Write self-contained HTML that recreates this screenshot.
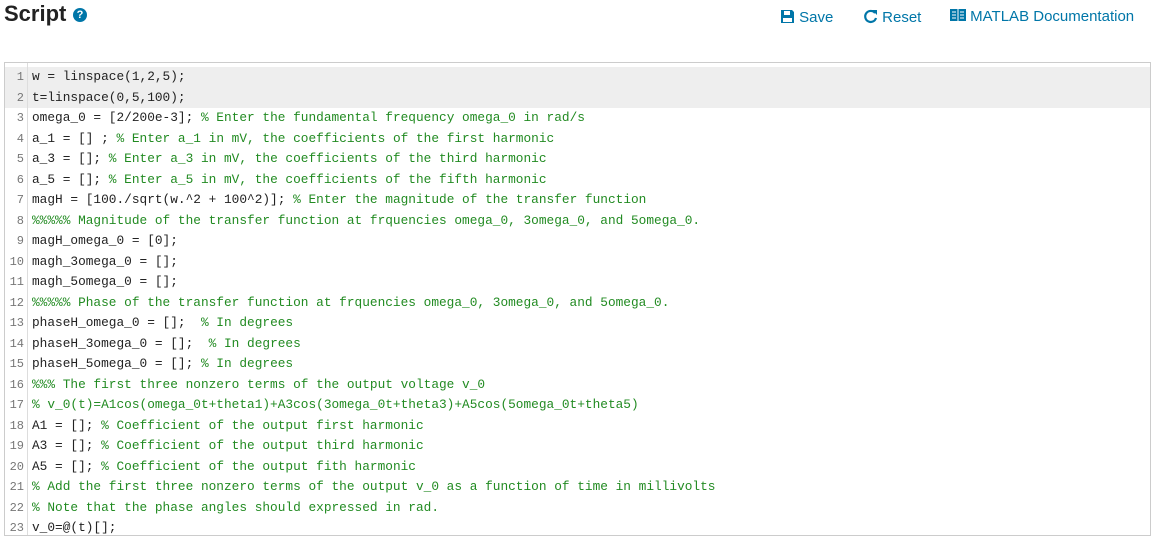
<!DOCTYPE html>
<html><head><meta charset="utf-8"><style>
body{margin:0;background:#fff;width:1163px;height:548px;overflow:hidden;font-family:"Liberation Sans",sans-serif;position:relative}
h1{position:absolute;left:4px;top:1px;margin:0;font-size:22px;font-weight:bold;color:#222}
.q{position:absolute;left:73px;top:8px;width:14px;height:14px;border-radius:50%;background:#0076a8;color:#fff;font-size:11px;font-weight:bold;text-align:center;line-height:14px}
.tb{position:absolute;top:9px;font-size:15px;color:#0076a8}
.ed{position:absolute;left:4px;top:62px;width:1147px;height:474px;border:1px solid #ccc;box-sizing:border-box;overflow:hidden}
.hl{position:absolute;left:0;right:0;top:4px;height:41px;background:#eee}
.g{position:absolute;left:0;top:4px;width:19px;text-align:right;font:12px/20.5px "Liberation Mono",monospace;color:#777}
.sep{position:absolute;left:22px;top:0;bottom:0;border-left:1px solid #ddd}
.c{position:absolute;left:27px;top:4px;font:12.8px/20.5px "Liberation Mono",monospace;color:#222;white-space:pre}
.k{color:#228b22}
</style></head><body>
<h1>Script</h1><div class="q">?</div>
<div class="tb" style="left:780px"><svg width="15" height="15" viewBox="0 0 15 15" style="vertical-align:-2px"><path d="M1 1h11l2 2v11H1z" fill="#0076a8"/><rect x="4" y="2" width="6" height="4" fill="#fff"/><rect x="3" y="9" width="9" height="4" fill="#fff"/></svg> Save</div>
<div class="tb" style="left:863px"><svg width="15" height="15" viewBox="0 0 15 15" style="vertical-align:-2px"><path d="M12 4A5.5 5.5 0 1 0 13 9" fill="none" stroke="#0076a8" stroke-width="2.2"/><path d="M9 1h5v5z" fill="#0076a8"/></svg> Reset</div>
<div class="tb" style="left:950px;top:8px"><svg width="16" height="14" viewBox="0 0 16 14" style="vertical-align:-1px"><rect x="0" y="1" width="16" height="12" fill="#0076a8"/><path d="M8 1v12M2 4h4M2 7h4M2 10h4M10 4h4M10 7h4M10 10h4" stroke="#fff" stroke-width="1"/></svg> MATLAB Documentation</div>
<div class="ed"><div class="hl"></div><div class="sep"></div>
<div class="g">1<br>2<br>3<br>4<br>5<br>6<br>7<br>8<br>9<br>10<br>11<br>12<br>13<br>14<br>15<br>16<br>17<br>18<br>19<br>20<br>21<br>22<br>23</div>
<div class="c">w = linspace(1,2,5);
t=linspace(0,5,100);
omega_0 = [2/200e-3]; <span class="k">% Enter the fundamental frequency omega_0 in rad/s</span>
a_1 = [] ; <span class="k">% Enter a_1 in mV, the coefficients of the first harmonic</span>
a_3 = []; <span class="k">% Enter a_3 in mV, the coefficients of the third harmonic</span>
a_5 = []; <span class="k">% Enter a_5 in mV, the coefficients of the fifth harmonic</span>
magH = [100./sqrt(w.^2 + 100^2)]; <span class="k">% Enter the magnitude of the transfer function</span>
<span class="k">%%%%% Magnitude of the transfer function at frquencies omega_0, 3omega_0, and 5omega_0.</span>
magH_omega_0 = [0];
magh_3omega_0 = [];
magh_5omega_0 = [];
<span class="k">%%%%% Phase of the transfer function at frquencies omega_0, 3omega_0, and 5omega_0.</span>
phaseH_omega_0 = [];  <span class="k">% In degrees</span>
phaseH_3omega_0 = [];  <span class="k">% In degrees</span>
phaseH_5omega_0 = []; <span class="k">% In degrees</span>
<span class="k">%%% The first three nonzero terms of the output voltage v_0</span>
<span class="k">% v_0(t)=A1cos(omega_0t+theta1)+A3cos(3omega_0t+theta3)+A5cos(5omega_0t+theta5)</span>
A1 = []; <span class="k">% Coefficient of the output first harmonic</span>
A3 = []; <span class="k">% Coefficient of the output third harmonic</span>
A5 = []; <span class="k">% Coefficient of the output fith harmonic</span>
<span class="k">% Add the first three nonzero terms of the output v_0 as a function of time in millivolts</span>
<span class="k">% Note that the phase angles should expressed in rad.</span>
v_0=@(t)[];</div>
</div>
</body></html>
